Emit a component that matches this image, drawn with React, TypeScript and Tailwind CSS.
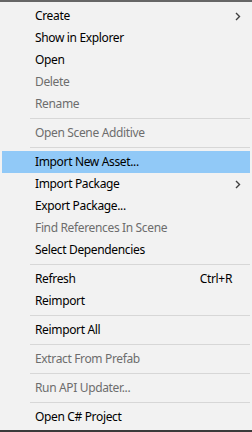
import React from "react";

type Item =
  | { type: "item"; label: string; disabled?: boolean; sub?: boolean; shortcut?: string; active?: boolean }
  | { type: "sep" };

const items: Item[] = [
  { type: "item", label: "Create", sub: true },
  { type: "item", label: "Show in Explorer" },
  { type: "item", label: "Open" },
  { type: "item", label: "Delete", disabled: true },
  { type: "item", label: "Rename", disabled: true },
  { type: "sep" },
  { type: "item", label: "Open Scene Additive", disabled: true },
  { type: "sep" },
  { type: "item", label: "Import New Asset...", active: true },
  { type: "item", label: "Import Package", sub: true },
  { type: "item", label: "Export Package..." },
  { type: "item", label: "Find References In Scene", disabled: true },
  { type: "item", label: "Select Dependencies" },
  { type: "sep" },
  { type: "item", label: "Refresh", shortcut: "Ctrl+R" },
  { type: "item", label: "Reimport" },
  { type: "sep" },
  { type: "item", label: "Reimport All" },
  { type: "sep" },
  { type: "item", label: "Extract From Prefab", disabled: true },
  { type: "sep" },
  { type: "item", label: "Run API Updater...", disabled: true },
  { type: "sep" },
  { type: "item", label: "Open C# Project" },
];

function Chevron() {
  return (
    <svg width="6" height="9" viewBox="0 0 6 9" className="block">
      <path d="M1 1 L4.5 4.5 L1 8" fill="none" stroke="#404040" strokeWidth="1.4" />
    </svg>
  );
}

export default function App() {
  return (
    <div
      className="w-[252px] h-[432px] bg-[#f2f2f2] border-t-2 border-b-2 border-t-[#666666] border-b-[#3a3a3a] pt-[3px] flex flex-col text-[12px] leading-none tracking-[-0.35px]"
      style={{ fontFamily: '"Noto Sans", "Open Sans", sans-serif' }}
    >
      {items.map((it, i) =>
        it.type === "sep" ? (
          <div key={i} className="h-[7px] flex items-center pl-[30px] pr-[2px]">
            <div className="h-px w-full bg-[#d7d7d7]" />
          </div>
        ) : (
          <div
            key={i}
            className={
              "h-[22px] mx-[2px] flex items-center pl-[33px] " +
              (it.active ? "bg-[#91c9f7] " : "") +
              (it.disabled ? "text-[#6d6d6d]" : "text-black")
            }
          >
            <span className="flex-1 whitespace-nowrap">{it.label}</span>
            {it.shortcut ? <span className="whitespace-nowrap">{it.shortcut}</span> : null}
            <span className="w-[18px] flex justify-start pl-[3px]">{it.sub ? <Chevron /> : null}</span>
          </div>
        )
      )}
    </div>
  );
}
